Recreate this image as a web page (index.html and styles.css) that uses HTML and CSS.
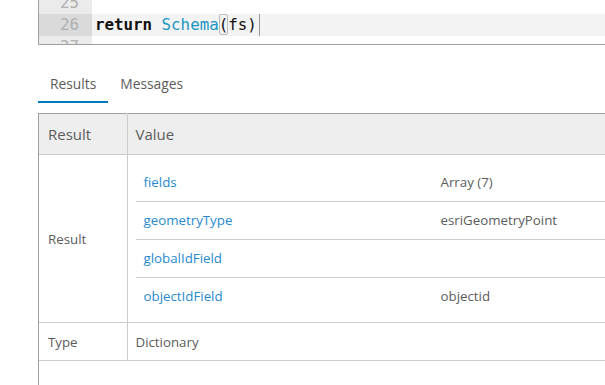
FILE: index.html
```html
<!DOCTYPE html>
<html lang="en">
<head>
  <meta charset="UTF-8" />
  <meta name="viewport" content="width=device-width, initial-scale=1.0"/>
  <title>Arcade Playground</title>
  <link rel="stylesheet" href="styles.css">
</head>
<body>
  <div class="editor">
    <div class="code-lines">
      <div class="code-line">
        <span class="gutter">25</span>
        <span class="code"></span>
      </div>
      <div class="code-line current">
        <span class="gutter">26</span>
        <span class="code"><span class="kw">return</span> <span class="fn">Schema</span><span class="match">(</span>fs)<span class="cursor"></span></span>
      </div>
      <div class="code-line">
        <span class="gutter">27</span>
        <span class="code"></span>
      </div>
    </div>
  </div>

  <div class="tabs">
    <button class="tab active">Results</button>
    <button class="tab">Messages</button>
  </div>

  <div class="results-panel">
    <table class="results">
      <thead>
        <tr>
          <th class="col-label">Result</th>
          <th>Value</th>
        </tr>
      </thead>
      <tbody>
        <tr>
          <td class="col-label">Result</td>
          <td class="nested-cell">
            <table class="dict">
              <tr>
                <td class="key"><a href="#">fields</a></td>
                <td>Array (7)</td>
              </tr>
              <tr>
                <td class="key"><a href="#">geometryType</a></td>
                <td>esriGeometryPoint</td>
              </tr>
              <tr>
                <td class="key"><a href="#">globalIdField</a></td>
                <td></td>
              </tr>
              <tr>
                <td class="key"><a href="#">objectIdField</a></td>
                <td>objectid</td>
              </tr>
            </table>
          </td>
        </tr>
        <tr class="type-row">
          <td class="col-label">Type</td>
          <td>Dictionary</td>
        </tr>
      </tbody>
    </table>
  </div>
</body>
</html>
```

FILE: styles.css
```css
:root {
  --text: #5c5c5c;
  --line: #cccccc;
  --frame: #a0a0a0;
  --link: #2789cf;
  --accent: #0079c1;
}

* {
  margin: 0;
  padding: 0;
  box-sizing: border-box;
}

body {
  width: 605px;
  height: 385px;
  overflow: hidden;
  background: #fff;
  font-family: "Open Sans", "Lato", sans-serif;
  color: var(--text);
}

/* code editor */
.editor {
  margin-left: 38px;
  height: 45px;
  overflow: hidden;
  border-left: 1px solid var(--frame);
  border-bottom: 1px solid var(--frame);
  font-family: "DejaVu Sans Mono", "Liberation Mono", monospace;
  font-size: 15.8px;
}

.code-lines {
  margin-top: -8px;
}

.code-line {
  display: flex;
  height: 22px;
  line-height: 22px;
}

.gutter {
  width: 53px;
  flex-shrink: 0;
  padding-right: 13px;
  text-align: right;
  background: #ebebeb;
  color: #b0b0b0;
}

.code {
  flex: 1;
  padding-left: 3px;
  color: #111;
  white-space: pre;
}

.code-line.current .gutter {
  background: #dadada;
}

.code-line.current .code {
  background: #f3f3f3;
}

.kw {
  font-weight: bold;
}

.fn {
  color: #1b96c4;
}

.match {
  display: inline-block;
  height: 21px;
  outline: 1px solid #bbb;
  outline-offset: -1px;
  border-radius: 2px;
}

.cursor {
  display: inline-block;
  width: 1px;
  height: 22px;
  margin-left: 2px;
  vertical-align: top;
  background: #999;
}

/* tabs */
.tabs {
  display: flex;
  margin: 19px 0 10px 38px;
}

.tab {
  background: none;
  border: none;
  border-bottom: 2px solid transparent;
  padding: 10px 12px 7px;
  font-family: inherit;
  font-size: 13.8px;
  line-height: 20px;
  color: var(--text);
  cursor: pointer;
}

.tab.active {
  border-bottom-color: var(--accent);
}

/* results table */
.results-panel {
  margin-left: 38px;
  height: 300px;
  border-left: 1px solid var(--frame);
}

.results {
  width: 700px;
  border-collapse: collapse;
  font-size: 13.3px;
}

.results th {
  height: 41px;
  padding: 0 8px;
  background: #eeeeee;
  border-top: 1px solid var(--frame);
  border-bottom: 1px solid var(--line);
  text-align: left;
  font-weight: normal;
  font-size: 15px;
}

.results td {
  padding: 0 8px;
  border-bottom: 1px solid var(--line);
}

.results .col-label {
  width: 88px;
  padding-left: 9px;
  border-right: 1px solid var(--line);
}

.results td.nested-cell {
  padding: 8px 0 8px 8px;
}

.type-row td {
  height: 38px;
}

.dict {
  width: 100%;
  border-collapse: collapse;
}

.dict td {
  height: 38px;
  padding: 0 8px;
  border-bottom: 1px solid var(--line);
}

.dict tr:last-child td {
  border-bottom: none;
  height: 37px;
}

.dict .key {
  width: 297px;
}

.dict a {
  color: var(--link);
  text-decoration: none;
}
```
